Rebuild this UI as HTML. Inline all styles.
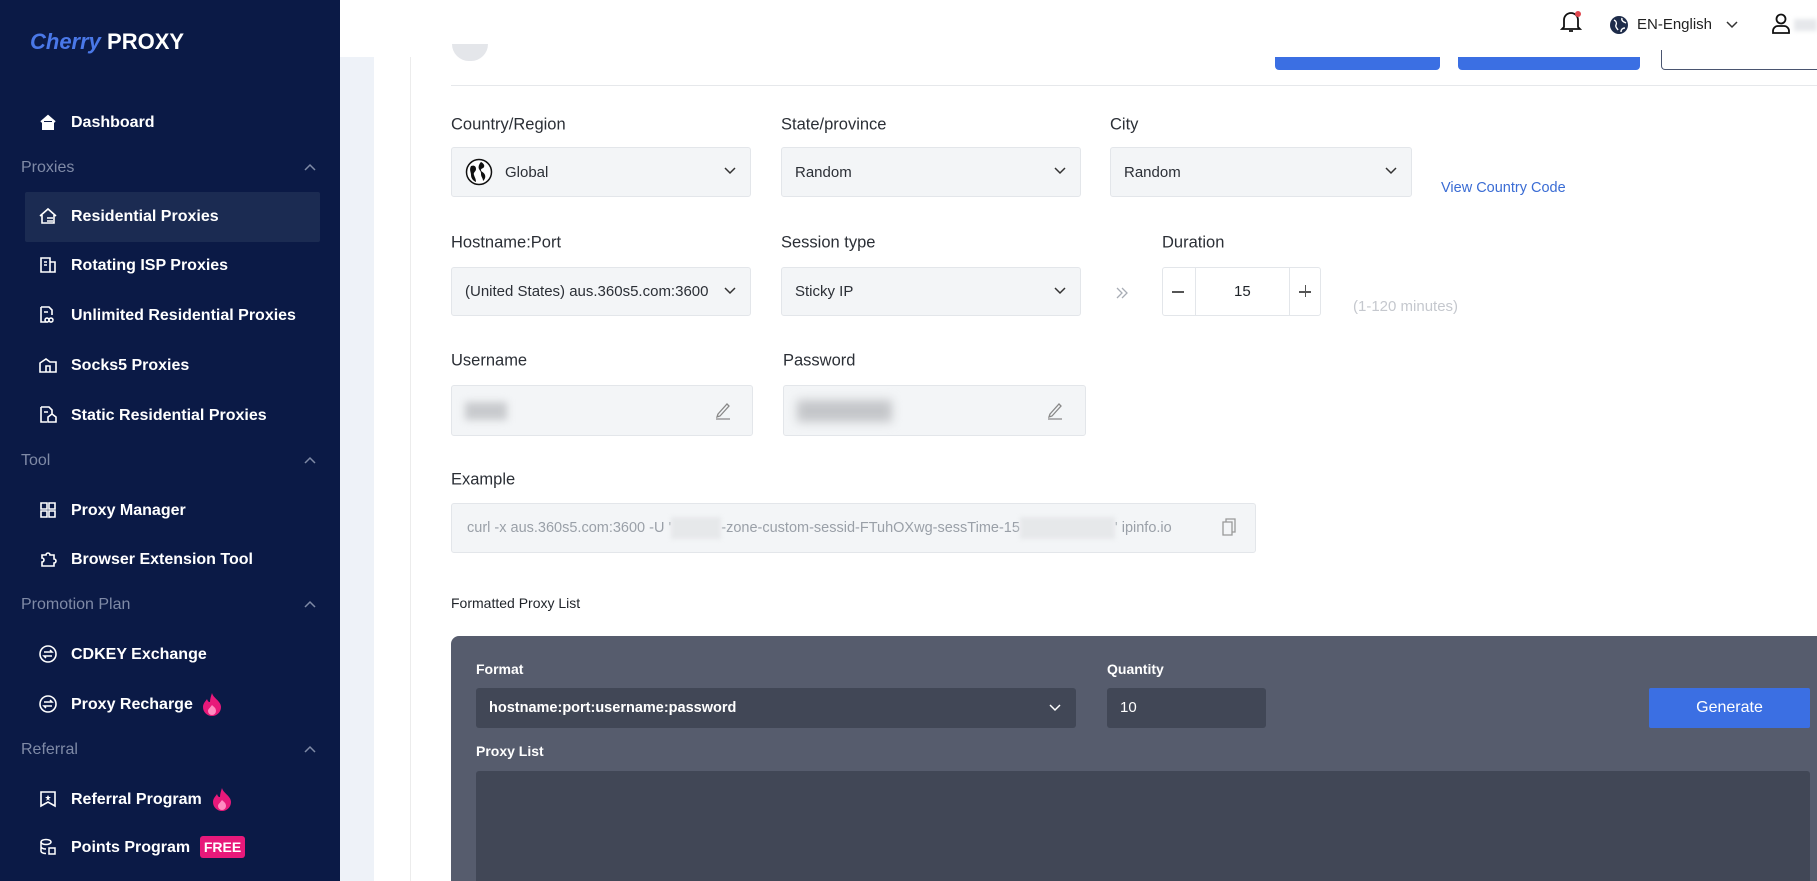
<!DOCTYPE html>
<html><head><meta charset="utf-8"><style>
*{margin:0;padding:0;box-sizing:border-box}
body{width:1817px;height:881px;overflow:hidden;background:#fff;font-family:"Liberation Sans",sans-serif;position:relative;color:#1f2329}
.a{position:absolute}
#sb{left:0;top:0;width:340px;height:881px;background:#0b1a46}
.it{position:absolute;left:71px;color:#fff;font-size:16px;font-weight:bold;transform:translateY(-50%);white-space:nowrap}
.ic{position:absolute;left:38px;width:20px;height:20px;transform:translateY(-50%)}
.sec{position:absolute;left:21px;color:#7f8aa6;font-size:16px;transform:translateY(-50%)}
.chev{position:absolute;left:304px;transform:translateY(-50%)}
.lbl{position:absolute;font-size:16.5px;color:#2b2f36;transform:translateY(-50%)}
.box{position:absolute;background:#f3f5f7;border:1px solid #e3e6ea;border-radius:3px;font-size:15px;color:#2b2f36;display:flex;align-items:center;padding-left:13px}
.dd{position:absolute;right:14px;top:50%;margin-top:-5px}
</style></head><body>
<div id="sb" class="a">
 <div class="a" style="left:30px;top:29px;font-size:22px;font-weight:bold;white-space:nowrap"><span style="color:#4a78e8;font-style:italic">Cherry</span> <span style="color:#fff">PROXY</span></div>
 <div class="a" style="left:25px;top:192px;width:295px;height:50px;background:#1b2b52;border-radius:2px"></div>
 <svg class="ic" style="top:122px" viewBox="0 0 20 20"><path d="M3 10L10 4l7 6M5 9v8h10V9" fill="#fff" stroke="#fff" stroke-width="2"/></svg>
 <div class="it" style="top:123px">Dashboard</div>
 <div class="sec" style="top:168px">Proxies</div>
 <svg class="chev" style="top:167px" width="12" height="8"><path d="M1 7l5-5 5 5" fill="none" stroke="#7f8aa6" stroke-width="1.5"/></svg>
 <svg class="ic" style="top:216px" viewBox="0 0 20 20"><path d="M2 10l8-7 8 7M4 9v8h12V9M9 12h6M9 15h6" fill="none" stroke="#fff" stroke-width="1.6"/></svg>
 <div class="it" style="top:217px">Residential Proxies</div>
 <svg class="ic" style="top:265px" viewBox="0 0 20 20"><path d="M3 3h9v14H3zM12 7h5v10h-5M6 7h3M6 10h3" fill="none" stroke="#fff" stroke-width="1.6"/></svg>
 <div class="it" style="top:266px">Rotating ISP Proxies</div>
 <svg class="ic" style="top:315px" viewBox="0 0 20 20"><path d="M3 2h8l3 3v5M3 2v15h6M6 7h4M11 15a2 2 0 1 0 0 .1M15 15a2 2 0 1 0 0 .1" fill="none" stroke="#fff" stroke-width="1.6"/></svg>
 <div class="it" style="top:316px">Unlimited Residential Proxies</div>
 <svg class="ic" style="top:365px" viewBox="0 0 20 20"><path d="M2 17V8l6-4 4 3h6v10zM8 17v-6h4v6" fill="none" stroke="#fff" stroke-width="1.6"/></svg>
 <div class="it" style="top:366px">Socks5 Proxies</div>
 <svg class="ic" style="top:415px" viewBox="0 0 20 20"><path d="M3 2h8l3 3v4M3 2v15h6M6 7h4M10 17v-5l4-3 4 3v5z" fill="none" stroke="#fff" stroke-width="1.6"/></svg>
 <div class="it" style="top:416px">Static Residential Proxies</div>
 <div class="sec" style="top:461px">Tool</div>
 <svg class="chev" style="top:460px" width="12" height="8"><path d="M1 7l5-5 5 5" fill="none" stroke="#7f8aa6" stroke-width="1.5"/></svg>
 <svg class="ic" style="top:510px" viewBox="0 0 20 20"><path d="M3 3h6v6H3zM11 3h6v6h-6zM3 11h6v6H3zM11 11h6v6h-6z" fill="none" stroke="#fff" stroke-width="1.6"/></svg>
 <div class="it" style="top:511px">Proxy Manager</div>
 <svg class="ic" style="top:559px" viewBox="0 0 20 20"><path d="M4 6h4a2 2 0 1 1 4 0h4v4a2 2 0 1 1 0 4v3H4v-4a2 2 0 1 0 0-4z" fill="none" stroke="#fff" stroke-width="1.6"/></svg>
 <div class="it" style="top:560px">Browser Extension Tool</div>
 <div class="sec" style="top:605px">Promotion Plan</div>
 <svg class="chev" style="top:604px" width="12" height="8"><path d="M1 7l5-5 5 5" fill="none" stroke="#7f8aa6" stroke-width="1.5"/></svg>
 <svg class="ic" style="top:654px" viewBox="0 0 20 20"><circle cx="10" cy="10" r="8" fill="none" stroke="#fff" stroke-width="1.6"/><path d="M6 8h8l-2-2M14 12H6l2 2" fill="none" stroke="#fff" stroke-width="1.5"/></svg>
 <div class="it" style="top:655px">CDKEY Exchange</div>
 <svg class="ic" style="top:704px" viewBox="0 0 20 20"><circle cx="10" cy="10" r="8" fill="none" stroke="#fff" stroke-width="1.6"/><path d="M6 8h8l-2-2M14 12H6l2 2" fill="none" stroke="#fff" stroke-width="1.5"/></svg>
 <div class="it" style="top:705px">Proxy Recharge</div>
 <svg class="a" style="left:201px;top:692px" width="22" height="24" viewBox="0 0 22 24"><path d="M11 1c1 5 9 8 9 14a9 9 0 0 1-18 0c0-4 3-6 4-8 1 3 2 3 3 3 0-3 1-6 2-9z" fill="#e8197a"/><path d="M11 13c2 2 4 3 4 6a4 4 0 0 1-8 0c0-2 2-3 4-6z" fill="#ff8cc0"/></svg>
 <div class="sec" style="top:750px">Referral</div>
 <svg class="chev" style="top:749px" width="12" height="8"><path d="M1 7l5-5 5 5" fill="none" stroke="#7f8aa6" stroke-width="1.5"/></svg>
 <svg class="ic" style="top:799px" viewBox="0 0 20 20"><path d="M3 3h14v14l-7-4-7 4z" fill="none" stroke="#fff" stroke-width="1.6"/><path d="M10 6l1 2h2l-2 1.5.8 2.2L10 10.5 8.2 11.7 9 9.5 7 8h2z" fill="#fff"/></svg>
 <div class="it" style="top:800px">Referral Program</div>
 <svg class="a" style="left:211px;top:787px" width="22" height="24" viewBox="0 0 22 24"><path d="M11 1c1 5 9 8 9 14a9 9 0 0 1-18 0c0-4 3-6 4-8 1 3 2 3 3 3 0-3 1-6 2-9z" fill="#e8197a"/><path d="M11 13c2 2 4 3 4 6a4 4 0 0 1-8 0c0-2 2-3 4-6z" fill="#ff8cc0"/></svg>
 <svg class="ic" style="top:847px" viewBox="0 0 20 20"><ellipse cx="8" cy="5" rx="5" ry="2.5" fill="none" stroke="#fff" stroke-width="1.5"/><path d="M3 5v9c0 1.4 2.2 2.5 5 2.5M3 9.5c0 1.4 2.2 2.5 5 2.5M11 11h6v6h-6z" fill="none" stroke="#fff" stroke-width="1.5"/></svg>
 <div class="it" style="top:848px">Points Program</div>
 <div class="a" style="left:200px;top:836px;width:45px;height:22px;background:#e8197a;border-radius:3px;color:#fff;font-weight:bold;font-size:14px;text-align:center;line-height:22px">FREE</div>
</div>

<svg class="a" style="left:1560px;top:10px" width="22" height="24" viewBox="0 0 22 24"><path d="M4 17V10a7 7 0 0 1 14 0v7l2 2H2zM9 21h4" fill="none" stroke="#111" stroke-width="1.8"/><circle cx="18" cy="4" r="3" fill="#e0464e"/></svg>
<svg class="a" style="left:1609px;top:15px" width="20" height="20" viewBox="0 0 20 20"><circle cx="10" cy="10" r="9" fill="#1e2c4a"/><path d="M5 5c2 1 3 3 2 5s1 3 2 5M13 3c-1 3 2 4 4 5M12 17c0-3 2-4 4-4" fill="none" stroke="#fff" stroke-width="1.4"/></svg>
<div class="a" style="left:1637px;top:16px;font-size:15px;color:#222">EN-English</div>
<svg class="a" style="left:1726px;top:21px" width="12" height="8"><path d="M1 1l5 5 5-5" fill="none" stroke="#333" stroke-width="1.5"/></svg>
<svg class="a" style="left:1771px;top:13px" width="20" height="22" viewBox="0 0 20 22"><circle cx="10" cy="6" r="4.5" fill="none" stroke="#111" stroke-width="1.8"/><path d="M2 20v-2a5 5 0 0 1 5-5h6a5 5 0 0 1 5 5v2z" fill="none" stroke="#111" stroke-width="1.8"/></svg>
<div class="a" style="left:1794px;top:19px;width:23px;height:12px;background:#e6e8eb;filter:blur(2px)"></div>

<div class="a" style="left:340px;top:57px;width:34px;height:824px;background:#eef2f8"></div>
<div class="a" style="left:410px;top:57px;width:1px;height:824px;background:#ececec"></div>
<div class="a" style="left:452px;top:44px;width:36px;height:17px;background:#e4e6ea;border-radius:0 0 18px 18px"></div>
<div class="a" style="left:1275px;top:57px;width:165px;height:13px;background:#3b6fe3;border-radius:0 0 4px 4px"></div>
<div class="a" style="left:1458px;top:57px;width:182px;height:13px;background:#3b6fe3;border-radius:0 0 4px 4px"></div>
<div class="a" style="left:1661px;top:50px;width:170px;height:20px;border:1px solid #4a5570;border-top:none;border-radius:0 0 0 4px"></div>
<div class="a" style="left:451px;top:85px;width:1366px;height:1px;background:#e6e8eb"></div>

<div class="lbl" style="left:451px;top:125px">Country/Region</div>
<div class="lbl" style="left:781px;top:125px">State/province</div>
<div class="lbl" style="left:1110px;top:125px">City</div>
<div class="box" style="left:451px;top:147px;width:300px;height:50px"><svg width="28" height="28" viewBox="0 0 28 28" style="margin-right:12px"><circle cx="14" cy="14" r="12.5" fill="#fff" stroke="#111" stroke-width="1.5"/><path d="M6 8c3-1 5 0 5 3s-3 3-2 6 2 4 2 7c-3-1-5-4-5-7s-2-5 0-9zM16 4c2 1 4 3 3 5s-3 1-3 3 3 2 4 5-1 5-2 6c0-3-2-4-2-7s-1-3-2-5 0-5 2-7z" fill="#111"/></svg>Global<svg class="dd" width="12" height="8"><path d="M1 1l5 5 5-5" fill="none" stroke="#333" stroke-width="1.5"/></svg></div>
<div class="box" style="left:781px;top:147px;width:300px;height:50px">Random<svg class="dd" width="12" height="8"><path d="M1 1l5 5 5-5" fill="none" stroke="#333" stroke-width="1.5"/></svg></div>
<div class="box" style="left:1110px;top:147px;width:302px;height:50px">Random<svg class="dd" width="12" height="8"><path d="M1 1l5 5 5-5" fill="none" stroke="#333" stroke-width="1.5"/></svg></div>
<div class="a" style="left:1441px;top:180px;font-size:14.5px;color:#3a6cd4">View Country Code</div>

<div class="lbl" style="left:451px;top:243px">Hostname:Port</div>
<div class="lbl" style="left:781px;top:243px">Session type</div>
<div class="lbl" style="left:1162px;top:243px">Duration</div>
<div class="box" style="left:451px;top:267px;width:300px;height:49px">(United States) aus.360s5.com:3600<svg class="dd" width="12" height="8"><path d="M1 1l5 5 5-5" fill="none" stroke="#333" stroke-width="1.5"/></svg></div>
<div class="box" style="left:781px;top:267px;width:300px;height:49px">Sticky IP<svg class="dd" width="12" height="8"><path d="M1 1l5 5 5-5" fill="none" stroke="#333" stroke-width="1.5"/></svg></div>
<svg class="a" style="left:1115px;top:286px" width="14" height="14"><path d="M2 2l5 5-5 5M7 2l5 5-5 5" fill="none" stroke="#a8adb5" stroke-width="1.3"/></svg>
<div class="a" style="left:1162px;top:267px;width:159px;height:49px;border:1px solid #e3e6ea;border-radius:3px;background:#fff"></div>
<div class="a" style="left:1195px;top:267px;width:1px;height:49px;background:#e3e6ea"></div>
<div class="a" style="left:1289px;top:267px;width:1px;height:49px;background:#e3e6ea"></div>
<div class="a" style="left:1172px;top:291px;width:12px;height:1.5px;background:#555"></div>
<div class="a" style="left:1234px;top:283px;font-size:15px">15</div>
<div class="a" style="left:1299px;top:291px;width:12px;height:1.5px;background:#555"></div>
<div class="a" style="left:1304.5px;top:285px;width:1.5px;height:12px;background:#555"></div>
<div class="a" style="left:1353px;top:298px;font-size:15px;color:#c5c8ce">(1-120 minutes)</div>

<div class="lbl" style="left:451px;top:361px">Username</div>
<div class="lbl" style="left:783px;top:361px">Password</div>
<div class="box" style="left:451px;top:385px;width:302px;height:51px"><div style="width:42px;height:18px;background:#c8cacd;filter:blur(4px)"></div></div>
<div class="box" style="left:783px;top:385px;width:303px;height:51px"><div style="width:95px;height:22px;background:#c4c6c9;filter:blur(5px)"></div></div>
<svg class="a" style="left:714px;top:400px" width="18" height="20"><path d="M4 14l9-10 2 2-9 10-3 1zM2 19h14" fill="none" stroke="#888" stroke-width="1.3"/></svg>
<svg class="a" style="left:1046px;top:400px" width="18" height="20"><path d="M4 14l9-10 2 2-9 10-3 1zM2 19h14" fill="none" stroke="#888" stroke-width="1.3"/></svg>

<div class="lbl" style="left:451px;top:480px">Example</div>
<div class="box" style="left:451px;top:503px;width:805px;height:50px;color:#9aa0a8;font-size:14.5px;padding-left:15px;white-space:nowrap">curl -x aus.360s5.com:3600 -U '<span style="display:inline-block;width:50px;height:22px;background:#e6e8ea;filter:blur(2px)"></span>-zone-custom-sessid-FTuhOXwg-sessTime-15<span style="display:inline-block;width:95px;height:22px;background:#e6e8ea;filter:blur(2px)"></span>' ipinfo.io</div>
<svg class="a" style="left:1220px;top:517px" width="18" height="20"><path d="M3 5h9v13H3zM6 5V2h9v13h-3" fill="none" stroke="#999" stroke-width="1.3"/></svg>

<div class="a" style="left:451px;top:595px;font-size:14px;color:#1f2329">Formatted Proxy List</div>

<div class="a" style="left:451px;top:636px;width:1366px;height:245px;background:#565c6d;border-radius:8px 0 0 0"></div>
<div class="a" style="left:476px;top:661px;font-size:14px;font-weight:bold;color:#fff">Format</div>
<div class="a" style="left:1107px;top:661px;font-size:14px;font-weight:bold;color:#fff">Quantity</div>
<div class="a" style="left:476px;top:688px;width:600px;height:40px;background:#414756;border-radius:3px;color:#fff;font-size:14.5px;line-height:40px;padding-left:13px;font-weight:bold">hostname:port:username:password</div>
<svg class="a" style="left:1049px;top:704px" width="12" height="8"><path d="M1 1l5 5 5-5" fill="none" stroke="#fff" stroke-width="1.5"/></svg>
<div class="a" style="left:1107px;top:688px;width:159px;height:40px;background:#414756;border-radius:3px;color:#fff;font-size:15px;line-height:40px;padding-left:13px">10</div>
<div class="a" style="left:1649px;top:688px;width:161px;height:40px;background:#3b6fe3;border-radius:2px;color:#fff;font-size:16px;line-height:40px;text-align:center">Generate</div>
<div class="a" style="left:476px;top:743px;font-size:14px;font-weight:bold;color:#fff">Proxy List</div>
<div class="a" style="left:476px;top:771px;width:1334px;height:110px;background:#414756;border-radius:3px 3px 0 0"></div>
</body></html>
